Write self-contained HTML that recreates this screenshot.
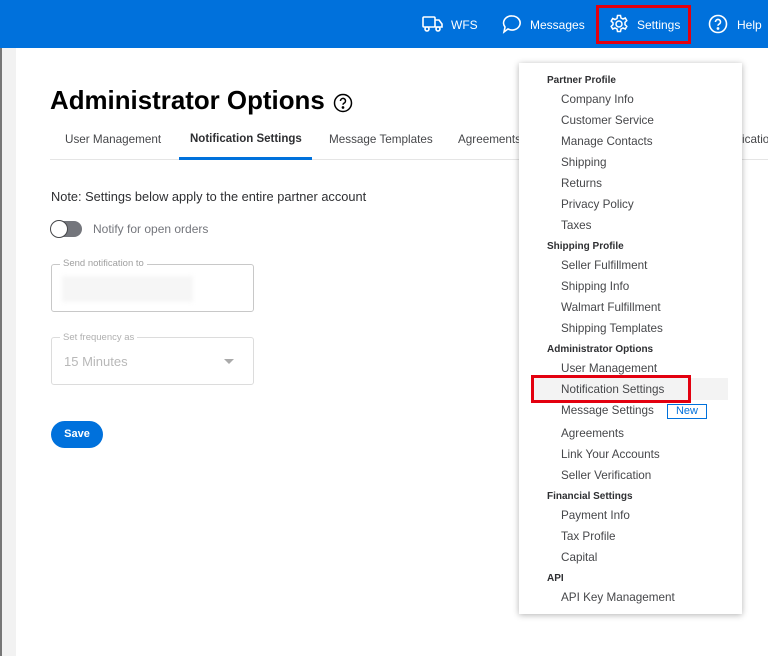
<!DOCTYPE html>
<html><head><style>
*{margin:0;padding:0;box-sizing:border-box}
body{width:768px;height:656px;overflow:hidden;background:#fff;font-family:"Liberation Sans",sans-serif;position:relative}
.hdr{position:absolute;left:0;top:0;width:768px;height:48px;background:#0071dc;color:#fff;font-size:12px}
.hdr span{position:absolute;top:18px}
.ab{position:absolute}
.side{position:absolute;left:0;top:48px;width:16px;height:608px;background:#f2f2f2;border-left:2px solid #777}
.menu{position:absolute;left:519px;top:63px;width:223px;height:551px;background:#fff;box-shadow:0 1px 6px rgba(0,0,0,.3);font-size:11.7px;color:#46474a}
.menu div{position:absolute;white-space:nowrap}
.h{left:28px;font-weight:bold;font-size:10px;color:#2e2f32;margin-top:2px}
.i{left:42px}
</style></head><body>
<div class="hdr">
<svg class="ab" style="left:422px;top:15px" width="22" height="18" viewBox="0 0 22 18" fill="none" stroke="#fff" stroke-width="1.6"><rect x="1" y="2" width="12" height="10" rx="1"/><path d="M13 5h4l3 4v3h-7"/><circle cx="5" cy="14" r="2" fill="#0071dc"/><circle cx="16" cy="14" r="2" fill="#0071dc"/></svg>
<span style="left:451px">WFS</span>
<svg class="ab" style="left:502px;top:14px" width="20" height="20" viewBox="0 0 20 20" fill="none" stroke="#fff" stroke-width="1.6"><path d="M10 2a8 7 0 1 1-4 13l-4 3 1-5A8 7 0 0 1 10 2z"/></svg>
<span style="left:530px">Messages</span>
<div class="ab" style="left:596px;top:5px;width:95px;height:39px;border:3px solid #e3000f"></div>
<svg class="ab" style="left:609px;top:14px" width="20" height="20" viewBox="0 0 20 20" fill="none" stroke="#fff" stroke-width="1.5"><circle cx="10" cy="10" r="3"/><path d="M8.5 1.5h3l.5 2.5 2 1 2.3-1 1.5 2.6-1.8 1.7v2.4l1.8 1.7-1.5 2.6-2.3-1-2 1-.5 2.5h-3l-.5-2.5-2-1-2.3 1-1.5-2.6 1.8-1.7V8.8L2.2 7.1l1.5-2.6 2.3 1 2-1z"/></svg>
<span style="left:637px">Settings</span>
<svg class="ab" style="left:708px;top:14px" width="20" height="20" viewBox="0 0 20 20" fill="none" stroke="#fff" stroke-width="1.6"><circle cx="10" cy="10" r="8.5"/><path d="M7.5 8a2.5 2.5 0 1 1 3.5 2.2c-.7.4-1 .8-1 1.6"/><circle cx="10" cy="14.5" r=".6" fill="#fff"/></svg>
<span style="left:737px">Help</span>
</div>
<div class="side"></div>
<div class="ab" style="left:50px;top:87px;font-size:25.9px;font-weight:bold;color:#000">Administrator Options</div>
<svg class="ab" style="left:333px;top:93px" width="20" height="20" viewBox="0 0 20 20" fill="none" stroke="#000" stroke-width="1.5"><circle cx="10" cy="10" r="8.5"/><path d="M7.5 8a2.5 2.5 0 1 1 3.5 2.2c-.7.4-1 .8-1 1.6"/><circle cx="10" cy="14.5" r=".6" fill="#000"/></svg>
<div class="ab" style="left:50px;top:159px;width:718px;height:1px;background:#e5e5e5"></div>
<div class="ab" style="left:179px;top:157px;width:133px;height:3px;background:#0071dc"></div>
<div class="ab" style="left:65px;top:133px;font-size:11.7px;color:#46474a">User Management</div>
<div class="ab" style="left:190px;top:133px;font-size:11.5px;font-weight:bold;color:#2e2f32">Notification Settings</div>
<div class="ab" style="left:329px;top:133px;font-size:11.7px;color:#46474a">Message Templates</div>
<div class="ab" style="left:458px;top:133px;font-size:11.7px;color:#46474a">Agreements</div>
<div class="ab" style="left:742px;top:133px;font-size:11.7px;color:#46474a">ication</div>
<div class="ab" style="left:51px;top:189px;font-size:12.8px;color:#2e2f32">Note: Settings below apply to the entire partner account</div>
<div class="ab" style="left:51px;top:221px;width:31px;height:16px;border-radius:8px;background:#74767c"></div>
<div class="ab" style="left:50px;top:220px;width:18px;height:18px;border-radius:9px;background:#fff;border:1.5px solid #46474a"></div>
<div class="ab" style="left:93px;top:222px;font-size:12px;color:#74767c">Notify for open orders</div>
<div class="ab" style="left:51px;top:264px;width:203px;height:48px;border:1px solid #c8c8c8;border-radius:3px"></div>
<div class="ab" style="left:60px;top:258px;background:#fff;padding:0 3px;font-size:9.5px;color:#a0a0a0">Send notification to</div>
<div class="ab" style="left:62px;top:276px;width:131px;height:26px;background:#f6f6f6;filter:blur(2px)"></div>
<div class="ab" style="left:51px;top:337px;width:203px;height:48px;border:1px solid #dcdcdc;border-radius:3px"></div>
<div class="ab" style="left:60px;top:332px;background:#fff;padding:0 3px;font-size:9.5px;color:#b0b0b0">Set frequency as</div>
<div class="ab" style="left:64px;top:354px;font-size:13px;color:#b8b8b8">15 Minutes</div>
<div class="ab" style="left:224px;top:359px;border-left:5px solid transparent;border-right:5px solid transparent;border-top:5px solid #aaa"></div>
<div class="ab" style="left:51px;top:421px;width:52px;height:27px;border-radius:14px;background:#0071dc;color:#fff;font-size:11px;font-weight:bold;text-align:center;line-height:27px">Save</div>
<div class="menu">
<div class="h" style="top:10px">Partner Profile</div>
<div class="i" style="top:30px">Company Info</div>
<div class="i" style="top:51px">Customer Service</div>
<div class="i" style="top:72px">Manage Contacts</div>
<div class="i" style="top:93px">Shipping</div>
<div class="i" style="top:114px">Returns</div>
<div class="i" style="top:135px">Privacy Policy</div>
<div class="i" style="top:156px">Taxes</div>
<div class="h" style="top:176px">Shipping Profile</div>
<div class="i" style="top:196px">Seller Fulfillment</div>
<div class="i" style="top:217px">Shipping Info</div>
<div class="i" style="top:238px">Walmart Fulfillment</div>
<div class="i" style="top:259px">Shipping Templates</div>
<div class="h" style="top:279px">Administrator Options</div>
<div class="i" style="top:299px">User Management</div>
<div style="left:12px;top:315px;width:197px;height:22px;background:#f3f3f3"></div>
<div style="left:12px;top:312px;width:160px;height:28px;border:3px solid #e3000f"></div>
<div class="i" style="top:320px">Notification Settings</div>
<div class="i" style="top:341px">Message Settings</div>
<div style="left:148px;top:341px;width:40px;height:15px;border:1px solid #0071dc;color:#0071dc;font-size:11px;text-align:center;line-height:13px">New</div>
<div class="i" style="top:364px">Agreements</div>
<div class="i" style="top:385px">Link Your Accounts</div>
<div class="i" style="top:406px">Seller Verification</div>
<div class="h" style="top:426px">Financial Settings</div>
<div class="i" style="top:446px">Payment Info</div>
<div class="i" style="top:467px">Tax Profile</div>
<div class="i" style="top:488px">Capital</div>
<div class="h" style="top:508px">API</div>
<div class="i" style="top:528px">API Key Management</div>
</div>
</body></html>
